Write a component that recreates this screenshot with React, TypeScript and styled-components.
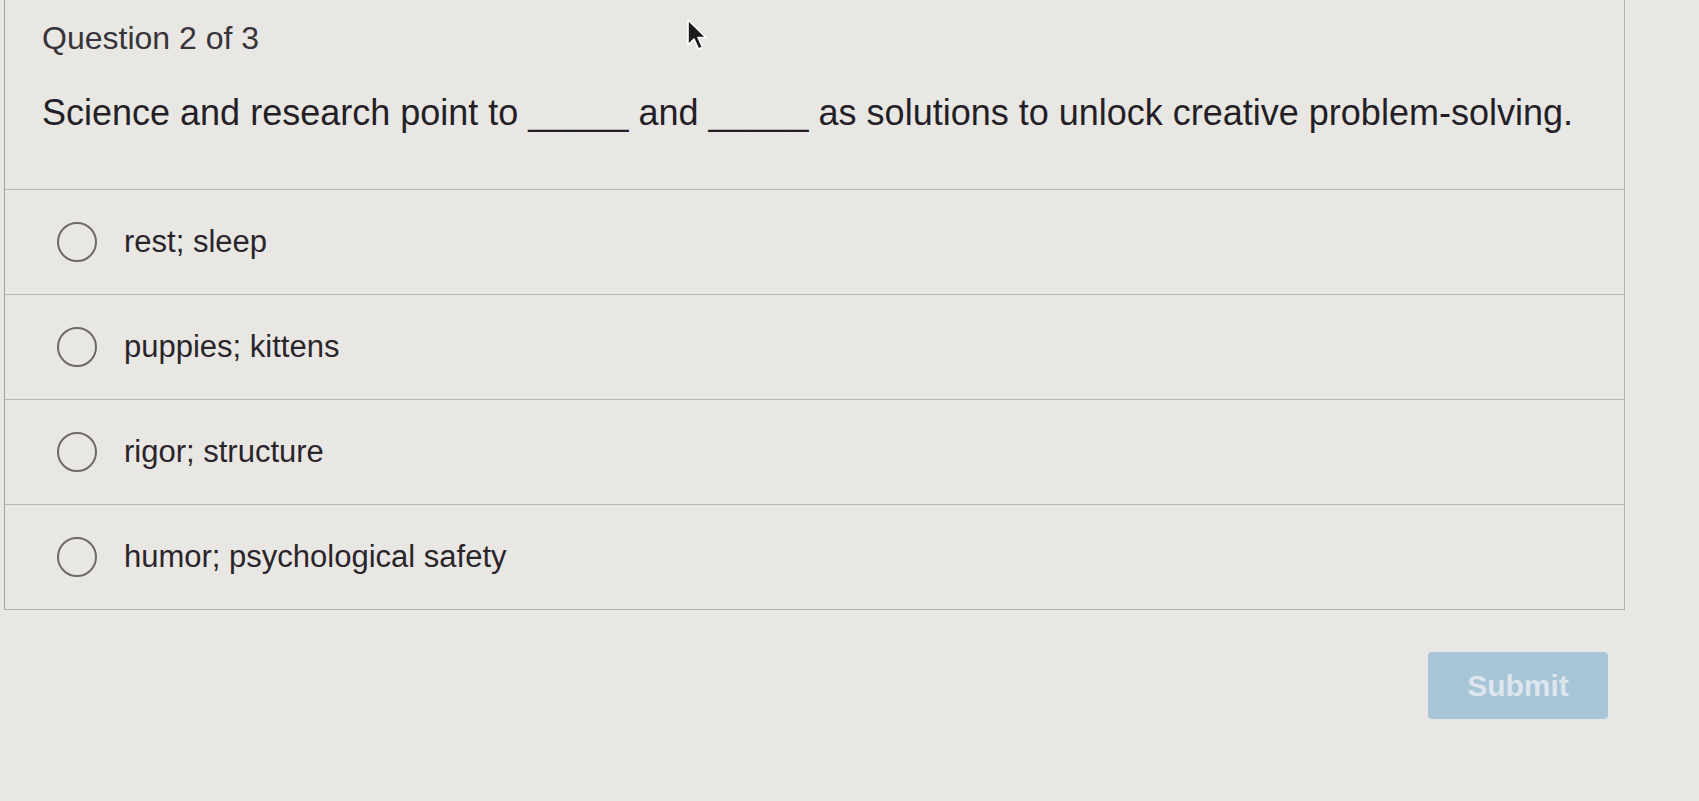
import styled, { createGlobalStyle } from 'styled-components';

const GlobalStyle = createGlobalStyle`
  html, body {
    margin: 0;
    padding: 0;
    background: #e9e7e3;
  }
  body {
    font-family: 'Liberation Sans', Arial, Helvetica, sans-serif;
    color: #2b272b;
  }
`;

const options = ['rest; sleep', 'puppies; kittens', 'rigor; structure', 'humor; psychological safety'];

const App = () => {
  return (
    <>
      <GlobalStyle />
      <Page>
        <QuizBox>
          <Header>
            <Counter>Question 2 of 3</Counter>
            <Prompt>
              Science and research point to _____ and _____ as solutions to unlock creative problem-solving.
            </Prompt>
          </Header>

          {options.map((label) => (
            <Option key={label}>
              <Radio />
              <OptionLabel>{label}</OptionLabel>
            </Option>
          ))}
        </QuizBox>

        <Actions>
          <SubmitButton disabled>Submit</SubmitButton>
        </Actions>

        <Cursor width="22" height="34" viewBox="0 0 22 34">
          <path
            d="M2 2 L2 27 L8 21 L12.5 31 L16.5 29.2 L12 19.5 L20 19.5 Z"
            fill="#1d1a1c"
            stroke="#ffffff"
            strokeWidth="1.6"
            strokeLinejoin="round"
          />
        </Cursor>
      </Page>
    </>
  );
};

const Page = styled.div`
  position: relative;
  width: 1699px;
  height: 801px;
  padding: 0 74px 0 4px;
  box-sizing: border-box;
`;

const QuizBox = styled.div`
  display: flex;
  flex-direction: column;
  border-left: 1.5px solid #a29f9c;
  border-right: 1.5px solid #b3b0ad;
  border-bottom: 1.5px solid #b3b0ad;
`;

const Header = styled.div`
  display: flex;
  flex-direction: column;
  padding: 19px 36px 55px 37px;
`;

const Counter = styled.div`
  font-size: 32px;
  line-height: 38px;
  color: #37343a;
  margin-bottom: 34px;
`;

const Prompt = styled.div`
  font-size: 36px;
  line-height: 43px;
  color: #241f26;
  white-space: nowrap;
`;

const Option = styled.div`
  display: flex;
  align-items: center;
  height: 104px;
  padding-left: 52px;
  border-top: 1.5px solid #b9b6b2;
`;

const Radio = styled.span`
  width: 36px;
  height: 36px;
  border: 2px solid #6e6a6b;
  border-radius: 50%;
  margin-right: 27px;
  flex-shrink: 0;
`;

const OptionLabel = styled.span`
  font-size: 31px;
  line-height: 38px;
  color: #2a252b;
`;

const Actions = styled.div`
  display: flex;
  justify-content: flex-end;
  padding: 42px 17px 0 0;
`;

const SubmitButton = styled.button`
  width: 180px;
  height: 67px;
  border: none;
  border-radius: 4px;
  background: #a8c5d7;
  color: #dce6ec;
  font-family: 'Liberation Sans', Arial, sans-serif;
  font-size: 30px;
  font-weight: bold;
  cursor: default;
`;

const Cursor = styled.svg`
  position: absolute;
  left: 686px;
  top: 18px;
`;

export default App;
